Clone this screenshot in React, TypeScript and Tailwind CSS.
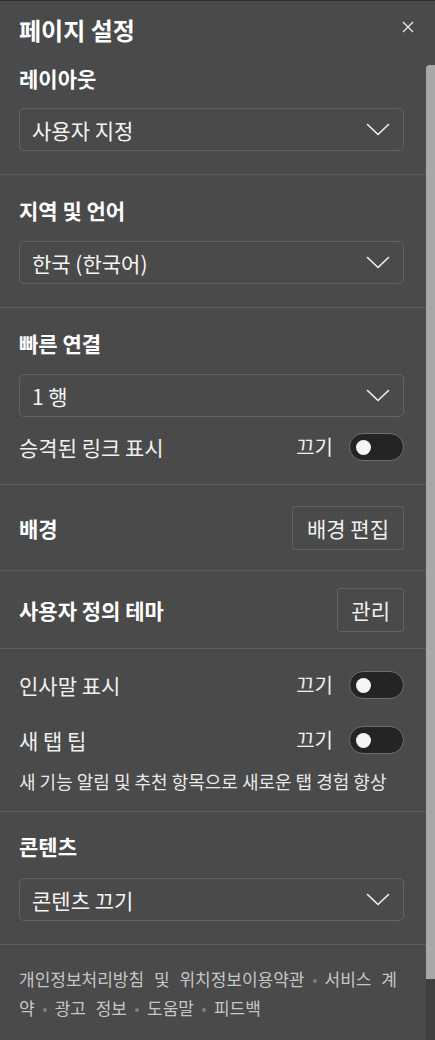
const font = "font-['Noto_Sans_CJK_KR','Noto_Sans',sans-serif]";

function Chevron() {
  return (
    <svg width="24" height="13" viewBox="0 0 24 13" fill="none">
      <polyline points="1.5,1.5 12,11.5 22.5,1.5" stroke="#f2f2f2" strokeWidth="1.6" strokeLinecap="round" strokeLinejoin="round" />
    </svg>
  );
}

function Select({ value }: { value: string }) {
  return (
    <div className="flex h-[43px] items-center justify-between rounded-[5px] border border-[#636363] pl-[12px] pr-[13px]">
      <span className="text-[21px] leading-6 text-[#f4f4f4]">{value}</span>
      <Chevron />
    </div>
  );
}

function Toggle({ label }: { label: string }) {
  return (
    <div className="flex h-[28px] items-center justify-between">
      <span className="text-[21px] leading-6 text-[#f0f0f0]">{label}</span>
      <div className="flex items-center gap-[16px]">
        <span className="text-[20px] leading-6 text-[#f0f0f0]">끄기</span>
        <div className="flex h-[28px] w-[55px] items-center rounded-full border border-[#6e6e6e] bg-[#242424] pl-[3px]">
          <div className="ml-[3px] h-[15px] w-[15px] rounded-full bg-[#f5f5f5]" />
        </div>
      </div>
    </div>
  );
}

function Divider() {
  return <div className="h-px bg-[#5c5c5c]" />;
}

function Heading({ children }: { children: string }) {
  return <h2 className="text-[21px] font-bold leading-6 text-white">{children}</h2>;
}

function Dot() {
  return <span className="mx-[8px] inline-block h-[4px] w-[4px] rounded-full bg-[#7e7e7e] align-middle" />;
}

export default function App() {
  return (
    <div className={`${font} flex h-[1040px] w-[435px] overflow-hidden border-t border-[#2f2f2f] bg-[#4a4a4a]`}>
      <div className="flex w-[426px] flex-col">
        {/* 레이아웃 */}
        <div className="pb-[23px] pl-[19px] pr-[22px] pt-[15px]">
          <div className="flex h-[28px] items-center justify-between">
            <h1 className="text-[24px] font-bold leading-7 text-white">페이지 설정</h1>
            <svg width="12" height="12" viewBox="0 0 12 12" className="mr-[-10px] mt-[-6px]">
              <path d="M1 1L11 11M11 1L1 11" stroke="#f2f2f2" strokeWidth="1.2" />
            </svg>
          </div>
          <div className="mt-[22px]">
            <Heading>레이아웃</Heading>
          </div>
          <div className="mt-[18px]">
            <Select value="사용자 지정" />
          </div>
        </div>
        <Divider />

        {/* 지역 및 언어 */}
        <div className="pb-[23px] pl-[19px] pr-[22px] pt-[23px]">
          <Heading>지역 및 언어</Heading>
          <div className="mt-[19px]">
            <Select value="한국 (한국어)" />
          </div>
        </div>
        <Divider />

        {/* 빠른 연결 */}
        <div className="pb-[23px] pl-[19px] pr-[22px] pt-[23px]">
          <Heading>빠른 연결</Heading>
          <div className="mt-[19px]">
            <Select value="1 행" />
          </div>
          <div className="mt-[16px]">
            <Toggle label="승격된 링크 표시" />
          </div>
        </div>
        <Divider />

        {/* 배경 */}
        <div className="flex items-center justify-between pb-[20px] pl-[19px] pr-[22px] pt-[21px]">
          <Heading>배경</Heading>
          <button className="h-[44px] rounded-[3px] border border-[#636363] px-[14px] text-[21px] leading-6 text-[#f0f0f0]">
            배경 편집
          </button>
        </div>
        <Divider />

        {/* 사용자 정의 테마 */}
        <div className="flex items-center justify-between pb-[16px] pl-[19px] pr-[22px] pt-[17px]">
          <Heading>사용자 정의 테마</Heading>
          <button className="h-[44px] rounded-[3px] border border-[#636363] px-[13px] text-[21px] leading-6 text-[#f0f0f0]">
            관리
          </button>
        </div>
        <Divider />

        {/* 인사말 / 새 탭 팁 */}
        <div className="pb-[18px] pl-[19px] pr-[22px] pt-[22px]">
          <Toggle label="인사말 표시" />
          <div className="mt-[27px]">
            <Toggle label="새 탭 팁" />
          </div>
          <p className="mt-[15px] whitespace-nowrap text-[18px] leading-6 text-[#e8e8e8]">새 기능 알림 및 추천 항목으로 새로운 탭 경험 향상</p>
        </div>
        <Divider />

        {/* 콘텐츠 */}
        <div className="pb-[23px] pl-[19px] pr-[22px] pt-[22px]">
          <Heading>콘텐츠</Heading>
          <div className="mt-[20px]">
            <Select value="콘텐츠 끄기" />
          </div>
        </div>
        <Divider />

        <p className="whitespace-nowrap pl-[19px] pt-[19px] text-[17px] leading-[29px] text-[#c6c6c6] [word-spacing:6px]">
          개인정보처리방침 및 위치정보이용약관
          <Dot />
          서비스 계<br />약
          <Dot />
          광고 정보
          <Dot />
          도움말
          <Dot />
          피드백
        </p>
      </div>

      {/* scrollbar */}
      <div className="flex w-[9px] flex-col">
        <div className="h-[64px] shrink-0" />
        <div className="h-[914px] shrink-0 rounded-tl-[4px] bg-[#a8a8a8]" />
        <div className="flex-1 bg-[#404040]" />
      </div>
    </div>
  );
}
